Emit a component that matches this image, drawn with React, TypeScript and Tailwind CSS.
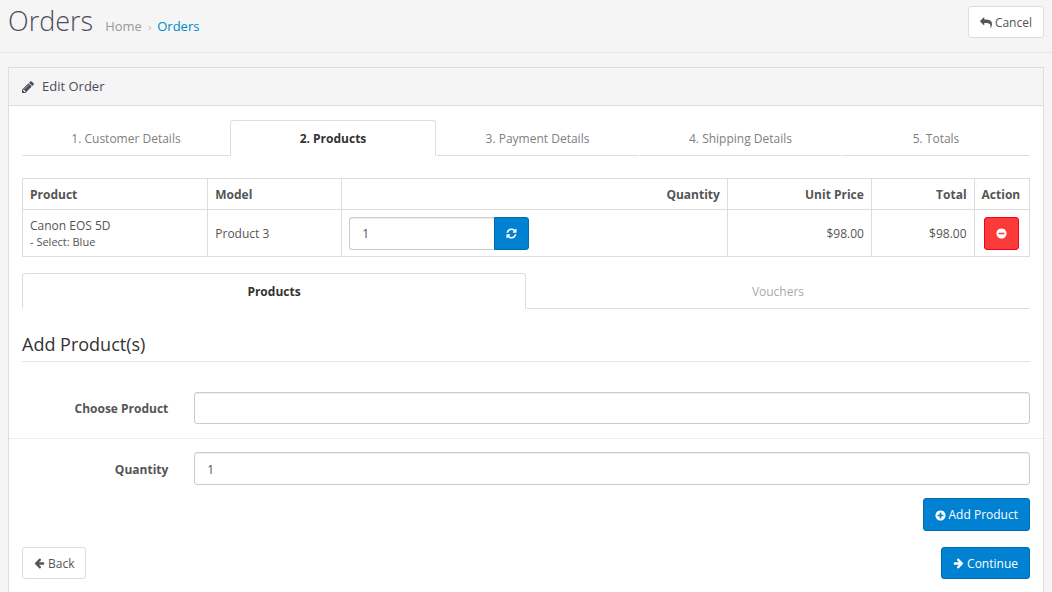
import { useState } from 'react'
import type { ReactNode } from 'react'
import clsx from 'clsx'

const icons = {
  pencil: {
    box: '128 128 1536 1536',
    d: 'M491 1536l91-91-235-235-91 91v107h128v128h107zm523-928q0-22-22-22-10 0-17 7l-542 542q-7 7-7 17 0 22 22 22 10 0 17-7l542-542q7-7 7-17zm-54-192l416 416-832 832h-416v-416zm683 96q0 53-37 90l-166 166-416-416 166-165q36-38 90-38 53 0 91 38l235 234q37 39 37 91z',
  },
  reply: {
    box: '0 0 1792 1792',
    d: 'M1792 1120q0 166-127 451-3 7-10.5 24t-13.5 30-13 22q-12 17-28 17-15 0-23.5-10t-8.5-25q0-9 2.5-26.5t2.5-23.5q5-68 5-123 0-101-17.5-181t-48.5-138.5-80-101-105.5-69.5-133-42.5-154-21.5-175.5-6h-224v256q0 26-19 45t-45 19-45-19l-512-512q-19-19-19-45t19-45l512-512q19-19 45-19t45 19 19 45v256h224q713 0 875 403 53 134 53 333z',
  },
  refresh: {
    box: '64 64 1664 1664',
    d: 'M1639 1056q0 5-1 7-64 268-268 434.5t-478 166.5q-146 0-282.5-55t-243.5-157l-129 129q-19 19-45 19t-45-19-19-45v-448q0-26 19-45t45-19h448q26 0 45 19t19 45-19 45l-137 137q71 66 161 102t187 36q134 0 250-65t186-179q11-17 53-117 8-23 30-23h192q13 0 22.5 9.5t9.5 22.5zm25-800v448q0 26-19 45t-45 19h-448q-26 0-45-19t-19-45 19-45l138-138q-148-137-349-137-134 0-250 65t-186 179q-11 17-53 117-8 23-30 23h-199q-13 0-22.5-9.5t-9.5-22.5v-7q65-268 270-434.5t480-166.5q146 0 284 55.5t245 156.5l130-129q19-19 45-19t45 19 19 45z',
  },
  minus: {
    box: '64 64 1664 1664',
    d: 'M1344 960v-128q0-26-19-45t-45-19h-768q-26 0-45 19t-19 45v128q0 26 19 45t45 19h768q26 0 45-19t19-45zm320-64q0 209-103 385.5t-279.5 279.5-385.5 103-385.5-103-279.5-279.5-103-385.5 103-385.5 279.5-279.5 385.5-103 385.5 103 279.5 279.5 103 385.5z',
  },
  plus: {
    box: '64 64 1664 1664',
    d: 'M1344 960v-128q0-26-19-45t-45-19h-256v-256q0-26-19-45t-45-19h-128q-26 0-45 19t-19 45v256h-256q-26 0-45 19t-19 45v128q0 26 19 45t45 19h256v256q0 26 19 45t45 19h128q26 0 45-19t19-45v-256h256q26 0 45-19t19-45zm320-64q0 209-103 385.5t-279.5 279.5-385.5 103-385.5-103-279.5-279.5-103-385.5 103-385.5 279.5-279.5 385.5-103 385.5 103 279.5 279.5 103 385.5z',
  },
  left: {
    box: '96 96 1664 1728',
    d: 'M1664 896v128q0 53-32.5 90.5t-84.5 37.5h-704l293 294q38 36 38 90t-38 90l-75 76q-37 37-90 37-52 0-91-37l-651-652q-37-37-37-90 0-52 37-91l651-650q38-38 91-38 52 0 90 38l75 74q38 38 38 91t-38 91l-293 293h704q52 0 84.5 37.5t32.5 90.5z',
  },
  right: {
    box: '32 96 1664 1728',
    d: 'M1600 960q0 54-37 91l-651 651q-39 37-91 37-51 0-90-37l-75-75q-38-38-38-91t38-91l293-293h-704q-52 0-84.5-37.5t-32.5-90.5v-128q0-53 32.5-90.5t84.5-37.5h704l-293-294q-38-36-38-90t38-90l75-75q38-38 90-38 53 0 91 38l651 651q37 35 37 90z',
  },
}

function Icon({ name, className }: { name: keyof typeof icons; className: string }) {
  return (
    <svg viewBox={icons[name].box} fill="currentColor" aria-hidden="true" className={className}>
      <path d={icons[name].d} />
    </svg>
  )
}

const button = 'inline-flex items-center gap-[3px] rounded-[3px] border px-[11px] pt-px'
const primary = 'border-[#006dad] bg-[#0081d1] text-white hover:bg-[#0070b8]'
const plain = 'border-[#dddddd] bg-white text-[#555555] hover:bg-gray-100'
const field =
  'min-w-0 border border-[#cccccc] bg-white px-3 pt-px text-[#555555] shadow-[inset_0_1px_1px_rgba(0,0,0,0.075)] outline-none focus:border-[#66afe9]'

const steps = ['1. Customer Details', '2. Products', '3. Payment Details', '4. Shipping Details', '5. Totals']

const columns = [
  { label: 'Product', className: 'w-[18.4%] text-left' },
  { label: 'Model', className: 'w-[13.3%] text-left' },
  { label: 'Quantity', className: 'w-[38.3%] text-right' },
  { label: 'Unit Price', className: 'w-[14.3%] text-right' },
  { label: 'Total', className: 'w-[10.2%] text-right' },
  { label: 'Action', className: 'text-left' },
]

type TabsProps = {
  items: string[]
  active: string
  onSelect: (item: string) => void
  className: string
  idle: string
}

function Tabs({ items, active, onSelect, className, idle }: TabsProps) {
  return (
    <div role="tablist" className={clsx('grid', className)}>
      {items.map((item) => (
        <button
          key={item}
          type="button"
          role="tab"
          aria-selected={item === active}
          onClick={() => onSelect(item)}
          className={clsx(
            'h-9 rounded-t-[3px] border pt-px text-center',
            item === active
              ? 'border-[#dddddd] border-b-white font-bold text-[#333333]'
              : 'border-transparent border-b-[#dddddd]',
            item !== active && idle,
          )}
        >
          {item}
        </button>
      ))}
    </div>
  )
}

function FormRow({ id, label, children }: { id: string; label: string; children: ReactNode }) {
  return (
    <div className="flex items-center">
      <label htmlFor={id} className="w-1/6 px-[13px] pt-0.5 text-right font-bold">
        {label}
      </label>
      <div className="flex flex-1 px-[13px]">{children}</div>
    </div>
  )
}

export default function App() {
  const [step, setStep] = useState('2. Products')
  const [kind, setKind] = useState('Products')

  return (
    <div className="min-h-screen bg-[#f5f5f5] font-['Open_Sans',sans-serif] text-xs text-[#555555]">
      <header className="flex items-start justify-between border-b border-[#e7e7e7] px-2 pt-1.5 pb-3.5">
        <div className="flex items-baseline gap-3">
          <h1 className="text-[27px] leading-[30px] font-light text-[#4c4d5a]">Orders</h1>
          <nav aria-label="Breadcrumb" className="flex items-baseline gap-1.5 text-[13px]">
            <a href="#home" className="text-[#999999]">
              Home
            </a>
            <span aria-hidden="true" className="text-[11px] text-[#bbbbbb]">
              ›
            </span>
            <a href="#orders" className="text-[#0088cc]">
              Orders
            </a>
          </nav>
        </div>
        <a href="#cancel" className={clsx(button, plain, 'h-8')}>
          <Icon name="reply" className="size-3" />
          Cancel
        </a>
      </header>

      <main className="mx-2 mt-3.5 border border-[#dddddd] bg-white">
        <div className="flex h-[38px] items-center gap-2 border-b border-[#dddddd] bg-[#f5f5f5] px-[13px] text-[#4c4d5a]">
          <Icon name="pencil" className="size-3" />
          <h2 className="text-[13px]">Edit Order</h2>
        </div>

        <div className="px-[13px] pt-3.5 pb-4">
          <Tabs
            items={steps}
            active={step}
            onSelect={setStep}
            className="grid-cols-[208fr_206fr_203fr_203fr_188fr]"
            idle="text-[#808080]"
          />

          <table className="mt-[22px] w-full table-fixed border-collapse">
            <thead>
              <tr>
                {columns.map((col) => (
                  <th
                    key={col.label}
                    scope="col"
                    className={clsx('h-[31px] border border-[#dddddd] px-[7px] pt-0.5 font-bold', col.className)}
                  >
                    {col.label}
                  </th>
                ))}
              </tr>
            </thead>
            <tbody>
              <tr className="h-[47px] *:border *:border-[#dddddd] *:px-[7px]">
                <td className="pt-0.5 leading-4">
                  Canon EOS 5D
                  <br />
                  <small className="text-[11px]">- Select: Blue</small>
                </td>
                <td className="pt-0.5">Product 3</td>
                <td>
                  <div className="flex h-[33px] max-w-[180px]">
                    <input
                      aria-label="Quantity of Canon EOS 5D"
                      defaultValue="1"
                      className={clsx(field, 'flex-1 rounded-l-[3px] border-r-0')}
                    />
                    <button type="button" aria-label="Refresh" className={clsx(button, primary, 'rounded-l-none')}>
                      <Icon name="refresh" className="size-[11px]" />
                    </button>
                  </div>
                </td>
                <td className="pt-0.5 text-right">$98.00</td>
                <td className="pt-0.5 text-right">$98.00</td>
                <td>
                  <div className="flex justify-center">
                    <button
                      type="button"
                      aria-label="Remove"
                      className={clsx(
                        button,
                        'h-[33px] border-[#f2001c] bg-[#fb3a3a] text-white hover:bg-[#e62e2e]',
                      )}
                    >
                      <Icon name="minus" className="size-[11px]" />
                    </button>
                  </div>
                </td>
              </tr>
            </tbody>
          </table>

          <div className="mt-4">
            <Tabs
              items={['Products', 'Vouchers']}
              active={kind}
              onSelect={setKind}
              className="grid-cols-2"
              idle="text-[#aaaaaa]"
            />
          </div>

          <form onSubmit={(e) => e.preventDefault()}>
            <h3 className="mt-[23px] border-b border-[#e5e5e5] pb-[5px] text-lg leading-6 text-[#333333]">
              Add Product(s)
            </h3>

            <div className="-mx-[13px] mt-[30px] border-b border-[#ededed] pb-3.5">
              <FormRow id="product" label="Choose Product">
                <input id="product" className={clsx(field, 'h-8 flex-1 rounded-[3px]')} />
              </FormRow>
            </div>
            <div className="-mx-[13px] mt-[13px]">
              <FormRow id="quantity" label="Quantity">
                <input id="quantity" defaultValue="1" className={clsx(field, 'h-[33px] flex-1 rounded-[3px]')} />
              </FormRow>
            </div>

            <div className="mt-[13px] flex justify-end">
              <button type="submit" className={clsx(button, primary, 'h-[33px]')}>
                <Icon name="plus" className="size-[11px]" />
                Add Product
              </button>
            </div>
          </form>

          <div className="mt-4 flex justify-between">
            <button type="button" className={clsx(button, plain, 'h-8')}>
              <Icon name="left" className="size-[11px]" />
              Back
            </button>
            <button type="button" className={clsx(button, primary, 'h-8')}>
              <Icon name="right" className="size-[11px]" />
              Continue
            </button>
          </div>
        </div>
      </main>
    </div>
  )
}
